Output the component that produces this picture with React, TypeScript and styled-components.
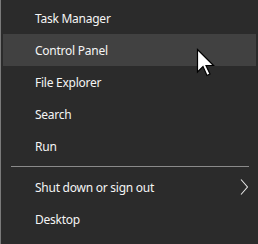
import React from "react";
import styled, { createGlobalStyle } from "styled-components";

const Global = createGlobalStyle`
  html, body { margin: 0; padding: 0; background: #2b2b2b; }
  body { font-family: "Noto Sans", "Open Sans", sans-serif; }
`;

const Menu = styled.div`
  position: relative;
  box-sizing: border-box;
  width: 258px;
  height: 244px;
  background: #2b2b2b;
  border-left: 1px solid #7a7a7a;
  padding: 2px 0 9px 0;
  display: flex;
  flex-direction: column;
  overflow: hidden;
`;

const Item = styled.div<{ $active?: boolean }>`
  box-sizing: border-box;
  height: 32px;
  margin: 0 2px 0 2px;
  padding: 0 11px 0 32px;
  display: flex;
  align-items: center;
  justify-content: space-between;
  background: ${(p) => (p.$active ? "#414141" : "transparent")};
  color: #f5f5f5;
  font-size: 12px;
  letter-spacing: -0.25px;
  white-space: nowrap;
`;

const Separator = styled.div`
  height: 1px;
  margin: 4px 9px 4px 10px;
  background: #8a8a8a;
`;

const Chevron = styled.svg`
  width: 8px;
  height: 16px;
  margin-right: -3px;
`;

const Cursor = styled.svg`
  position: absolute;
  left: 195px;
  top: 48px;
  width: 19px;
  height: 30px;
`;

const items1 = ["Task Manager", "Control Panel", "File Explorer", "Search", "Run"];

export default function App() {
  return (
    <>
      <Global />
      <Menu>
        {items1.map((t) => (
          <Item key={t} $active={t === "Control Panel"}>
            {t}
          </Item>
        ))}
        <Separator />
        <Item>
          Shut down or sign out
          <Chevron viewBox="0 0 8 16">
            <path d="M1 0.5 L7.5 8 L1 15.5" fill="none" stroke="#e6e6e6" strokeWidth="1.1" />
          </Chevron>
        </Item>
        <Item>Desktop</Item>
        <Cursor viewBox="0 0 19 30">
          <path
            d="M1.5 1.5 L1.5 24 L7 18.5 L11 27.5 L14 26 L10 17.5 L17.5 17.5 Z"
            fill="#ffffff"
            stroke="#000000"
            strokeWidth="1.2"
            strokeLinejoin="miter"
          />
        </Cursor>
      </Menu>
    </>
  );
}
